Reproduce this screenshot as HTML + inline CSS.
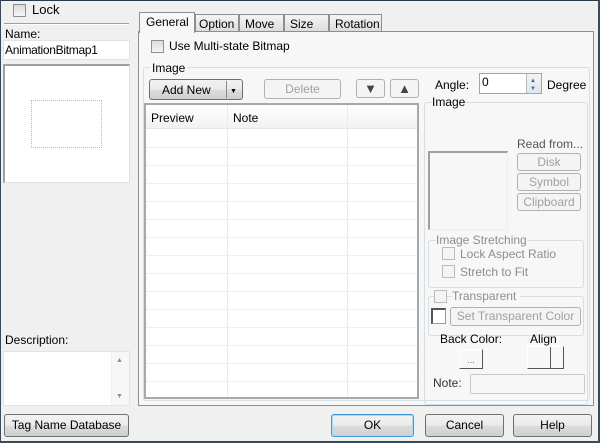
<!DOCTYPE html><html><head><style>
*{box-sizing:border-box}
body{margin:0;width:600px;height:443px;overflow:hidden;background:#f0f0f0;font-family:"Liberation Sans",sans-serif;font-size:12px;color:#000;position:relative}
.a{position:absolute}
.t{position:absolute;white-space:nowrap;line-height:14px}
.cb{position:absolute;width:13px;height:13px;border:1px solid #8e8f8f;background:linear-gradient(#dcdcdc,#f6f6f6)}
.btn{position:absolute;border:1px solid #707070;border-radius:3px;background:linear-gradient(#f2f2f2 0,#ebebeb 50%,#dddddd 51%,#cfcfcf 100%);text-align:center;line-height:20px}
.dis{border-color:#adb2b5;background:#f4f4f4;color:#a0a0a0}
.g{position:absolute;border:1px solid #d5dfe5;border-radius:3px}
.gray{color:#8d8d8d}
</style></head><body>
<div class="a" style="left:0;top:0;width:600px;height:1px;background:#2a3a4a"></div>
<div class="a" style="left:0;top:0;width:1px;height:443px;background:#3a4a5a"></div>
<div class="a" style="left:598px;top:0;width:2px;height:443px;background:#3a4a5a"></div>
<div class="a" style="left:0;top:441px;width:600px;height:2px;background:#3a4a5a"></div>

<div class="cb" style="left:13px;top:4px"></div><div class="t" style="left:32px;top:3px;font-size:13px">Lock</div>
<div class="a" style="left:4px;top:23px;width:125px;height:2px;border-top:1px solid #a0a0a0;border-bottom:1px solid #fff"></div>
<div class="t" style="left:5px;top:27px">Name:</div>
<div class="a" style="left:3px;top:40px;width:127px;height:20px;background:#fff;border:1px solid #e3e3e3"></div>
<div class="t" style="left:5px;top:43px;letter-spacing:-0.3px">AnimationBitmap1</div>
<div class="a" style="left:3px;top:64px;width:127px;height:119px;background:#fff;border:1px solid #e0e0e0;border-top:2px solid #a0a0a0;border-left:2px solid #a0a0a0"></div>
<div class="a" style="left:31px;top:100px;width:71px;height:48px;border:1px dotted #bbb"></div>
<div class="t" style="left:5px;top:333px">Description:</div>
<div class="a" style="left:3px;top:351px;width:127px;height:55px;background:#fff;border:1px solid #e3e3e3"></div>
<div class="a" style="left:111px;top:352px;width:18px;height:53px;background:#f7f7f7;border-left:1px solid #eee"></div>
<div class="t gray" style="left:116px;top:354px;font-size:7px">▲</div>
<div class="t gray" style="left:116px;top:390px;font-size:7px">▼</div>
<div class="btn" style="left:4px;top:414px;width:125px;height:23px">Tag Name Database</div>

<!-- tabs -->
<div class="a" style="left:138px;top:31px;width:456px;height:375px;border:1px solid #8c8e94;background:#f7f7f7"></div>
<div class="a" style="left:195px;top:14px;width:44px;height:18px;border:1px solid #8c8e94;background:linear-gradient(#f5f5f5,#dcdcdc)"></div><div class="t" style="left:199px;top:17px">Option</div>
<div class="a" style="left:239px;top:14px;width:45px;height:18px;border:1px solid #8c8e94;background:linear-gradient(#f5f5f5,#dcdcdc)"></div><div class="t" style="left:245px;top:17px">Move</div>
<div class="a" style="left:284px;top:14px;width:45px;height:18px;border:1px solid #8c8e94;background:linear-gradient(#f5f5f5,#dcdcdc)"></div><div class="t" style="left:290px;top:17px">Size</div>
<div class="a" style="left:329px;top:14px;width:53px;height:18px;border:1px solid #8c8e94;background:linear-gradient(#f5f5f5,#dcdcdc)"></div><div class="t" style="left:335px;top:17px">Rotation</div>
<div class="a" style="left:139px;top:12px;width:56px;height:21px;border:1px solid #8c8e94;border-bottom:none;background:#f7f7f7"></div><div class="t" style="left:146px;top:15px">General</div>

<div class="cb" style="left:151px;top:40px"></div><div class="t" style="left:169px;top:39px">Use Multi-state Bitmap</div>
<div class="g" style="left:143px;top:67px;width:447px;height:334px"></div>
<div class="t" style="left:150px;top:61px;background:#f7f7f7;padding:0 2px">Image</div>

<div class="btn" style="left:149px;top:79px;width:94px;height:21px">&nbsp;</div>
<div class="t" style="left:162px;top:83px">Add New</div>
<div class="a" style="left:226px;top:81px;width:1px;height:17px;background:#888"></div>
<div class="t" style="left:230px;top:85px;font-size:7px">▼</div>
<div class="btn dis" style="left:264px;top:79px;width:77px;height:20px;line-height:18px">Delete</div>
<div class="btn dis" style="left:356px;top:79px;width:29px;height:19px;color:#444;line-height:17px;font-size:13px">▼</div>
<div class="btn dis" style="left:390px;top:79px;width:29px;height:19px;color:#444;line-height:17px;font-size:13px">▲</div>

<div class="a" style="left:144px;top:103px;width:275px;height:296px;background:#fff;border:2px solid #a8a8a8"></div>
<div class="a" style="left:146px;top:105px;width:271px;height:24px;background:linear-gradient(#fff,#f1f2f3);border-bottom:1px solid #e5e5e5"></div>
<div class="t" style="left:151px;top:111px">Preview</div><div class="t" style="left:233px;top:111px">Note</div>
<div class="a" style="left:227px;top:105px;width:1px;height:292px;background:#eaeaea"></div>
<div class="a" style="left:347px;top:105px;width:1px;height:292px;background:#eaeaea"></div>
<div class="a" style="left:146px;top:147px;width:271px;height:250px;background:repeating-linear-gradient(#efefef 0,#efefef 1px,transparent 1px,transparent 18px)"></div>

<div class="t" style="left:435px;top:78px">Angle:</div>
<div class="a" style="left:479px;top:73px;width:63px;height:21px;background:#fff;border:1px solid #9aa;"></div>
<div class="t" style="left:482px;top:75px">0</div>
<div class="a" style="left:526px;top:74px;width:15px;height:19px;background:linear-gradient(#f4f4f4,#dfe6ee);border-left:1px solid #bbb"></div>
<div class="t" style="left:530px;top:74px;font-size:6px;color:#36a">▲</div><div class="t" style="left:530px;top:82px;font-size:6px;color:#36a">▼</div>
<div class="t" style="left:547px;top:78px">Degree</div>

<div class="g" style="left:424px;top:102px;width:164px;height:303px"></div>
<div class="t" style="left:432px;top:95px;background:#f7f7f7">Image</div>
<div class="t gray" style="left:517px;top:137px;color:#555">Read from...</div>
<div class="a" style="left:428px;top:151px;width:80px;height:79px;border:2px solid #a0a0a0;border-right:1px solid #eee;border-bottom:1px solid #eee"></div>
<div class="btn dis" style="left:517px;top:153px;width:64px;height:18px;line-height:16px">Disk</div>
<div class="btn dis" style="left:517px;top:173px;width:64px;height:18px;line-height:16px">Symbol</div>
<div class="btn dis" style="left:517px;top:193px;width:64px;height:18px;line-height:16px">Clipboard</div>

<div class="g" style="left:428px;top:240px;width:156px;height:48px"></div>
<div class="t gray" style="left:436px;top:233px;background:#f7f7f7">Image Stretching</div>
<div class="cb" style="left:442px;top:247px;background:#f4f4f4;border-color:#bbb"></div><div class="t gray" style="left:460px;top:247px">Lock Aspect Ratio</div>
<div class="cb" style="left:442px;top:265px;background:#f4f4f4;border-color:#bbb"></div><div class="t gray" style="left:460px;top:265px">Stretch to Fit</div>

<div class="g" style="left:428px;top:296px;width:156px;height:40px"></div>
<div class="cb" style="left:434px;top:290px;background:#f4f4f4;border-color:#bbb"></div><div class="t gray" style="left:452px;top:289px;background:#f7f7f7;padding-right:4px">Transparent</div>
<div class="a" style="left:431px;top:308px;width:15px;height:16px;background:#fff;border:1px solid #999;border-top:2px solid #555;border-left:2px solid #555"></div>
<div class="btn dis" style="left:450px;top:307px;width:131px;height:19px;line-height:17px">Set Transparent Color</div>

<div class="t" style="left:440px;top:332px">Back Color:</div>
<div class="a" style="left:459px;top:349px;width:24px;height:20px;border:1px solid #fff;border-right:1px solid #555;border-bottom:1px solid #555;text-align:center;font-size:9px;color:#666;line-height:20px">...</div>
<div class="t" style="left:530px;top:332px">Align</div>
<div class="a" style="left:527px;top:346px;width:37px;height:23px;border:1px solid #fff;border-right:1px solid #555;border-bottom:1px solid #555"></div>
<div class="a" style="left:550px;top:347px;width:1px;height:21px;background:#555"></div>
<div class="t" style="left:433px;top:376px;color:#333">Note:</div>
<div class="a" style="left:470px;top:374px;width:115px;height:20px;border:1px solid #c8c8c8;border-radius:2px"></div>

<div class="btn" style="left:331px;top:414px;width:83px;height:23px;border-color:#3c9bd6;box-shadow:inset 0 0 0 1px #a8dcf5">OK</div>
<div class="btn" style="left:425px;top:414px;width:79px;height:23px">Cancel</div>
<div class="btn" style="left:513px;top:414px;width:79px;height:23px">Help</div>
</body></html>
